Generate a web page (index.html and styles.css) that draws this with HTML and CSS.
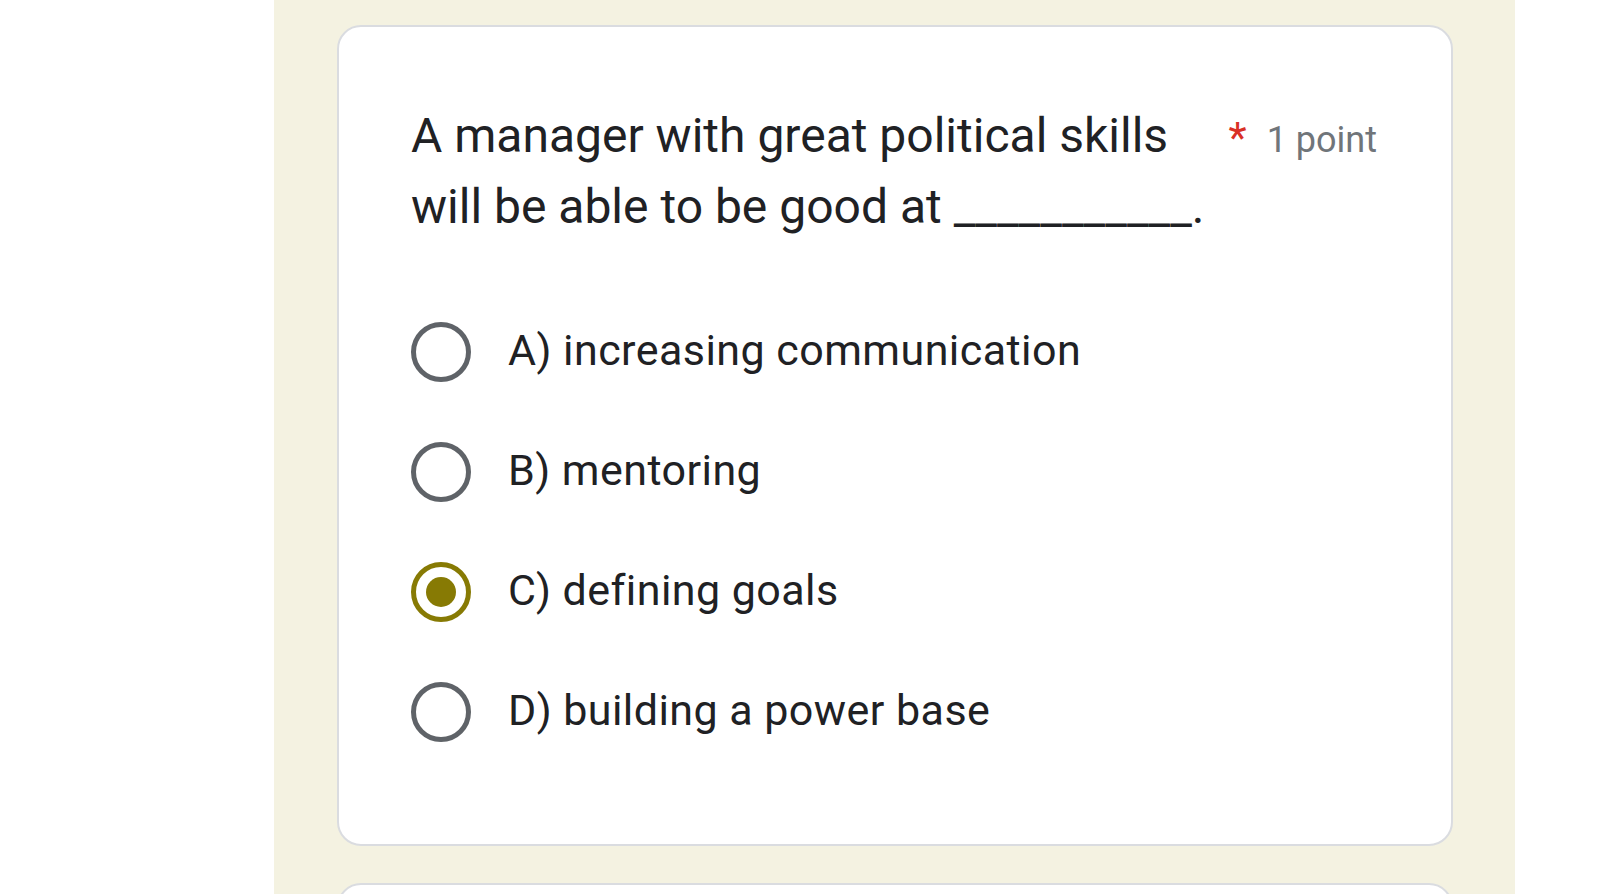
FILE: index.html
```html
<!DOCTYPE html>
<html lang="en">
<head>
<meta charset="utf-8">
<title>Question</title>
<link rel="stylesheet" href="styles.css">
</head>
<body>
<div class="column">
  <div class="card">
    <div class="title-row">
      <div class="title">A manager with great political skills will be able to be good at ___________.</div>
      <span class="required">*</span>
      <span class="points">1 point</span>
    </div>
    <div class="options">
      <div class="option"><span class="radio"></span><span class="label">A) increasing communication</span></div>
      <div class="option"><span class="radio"></span><span class="label">B) mentoring</span></div>
      <div class="option"><span class="radio checked"></span><span class="label">C) defining goals</span></div>
      <div class="option"><span class="radio"></span><span class="label">D) building a power base</span></div>
    </div>
  </div>
  <div class="card next"></div>
</div>
</body>
</html>
```

FILE: styles.css
```css
html, body {
  margin: 0;
  padding: 0;
  background: #ffffff;
  height: 100%;
  overflow: hidden;
}
body {
  font-family: Roboto, "Noto Sans", sans-serif;
  color: #202124;
}
.column {
  margin-left: 274px;
  width: 1241px;
  height: 894px;
  overflow: hidden;
  background: #f4f2e1;
  padding: 25px 62px 0 63px;
  box-sizing: border-box;
  display: flex;
  flex-direction: column;
  gap: 37px;
}
.card {
  background: #ffffff;
  border: 2px solid #dadce0;
  border-radius: 24px;
  padding: 73px 74px 72px 72px;
  flex-shrink: 0;
}
.card.next {
  height: 200px;
  padding: 0;
}
.title-row {
  display: flex;
  align-items: baseline;
}
.title {
  flex: 1;
  font-size: 48px;
  line-height: 71px;
  color: #202124;
}
.required {
  color: #d93025;
  font-size: 42px;
  margin-left: 12px;
  line-height: 1;
}
.points {
  color: #70757a;
  font-size: 36px;
  margin-left: 20px;
  white-space: nowrap;
}
.options {
  margin-top: 50px;
  display: flex;
  flex-direction: column;
}
.option {
  height: 120px;
  display: flex;
  align-items: center;
}
.radio {
  width: 60px;
  height: 60px;
  box-sizing: border-box;
  border: 5px solid #5f6368;
  border-radius: 50%;
  flex-shrink: 0;
  display: flex;
  align-items: center;
  justify-content: center;
}
.radio.checked {
  border-color: #877a04;
}
.radio.checked::after {
  content: "";
  width: 30px;
  height: 30px;
  border-radius: 50%;
  background: #877a04;
}
.label {
  margin-left: 37px;
  padding-bottom: 4px;
  font-size: 43px;
  letter-spacing: 0.45px;
  line-height: 60px;
  color: #202124;
}
```
